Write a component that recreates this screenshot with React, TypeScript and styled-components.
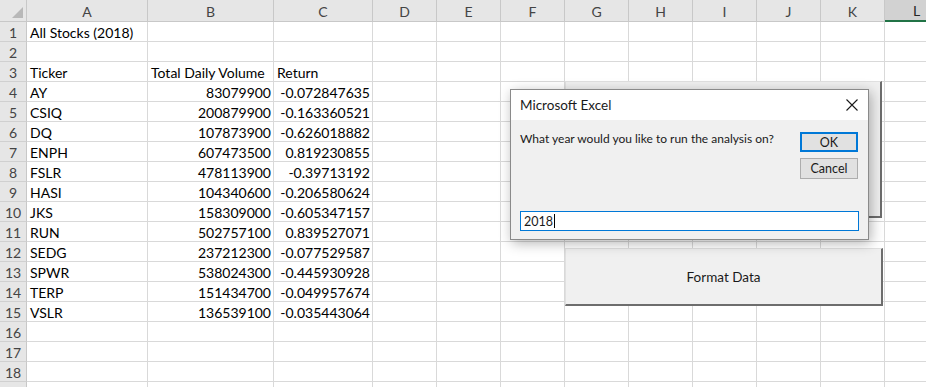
import React from "react";
import styled, { createGlobalStyle } from "styled-components";

const GlobalStyle = createGlobalStyle`
  html, body {
    margin: 0;
    padding: 0;
    background: #ffffff;
    overflow: hidden;
  }
  * {
    box-sizing: border-box;
  }
`;

const columns = ["A", "B", "C", "D", "E", "F", "G", "H", "I", "J", "K", "L"];

const stocks: [string, string, string][] = [
  ["AY", "83079900", "-0.072847635"],
  ["CSIQ", "200879900", "-0.163360521"],
  ["DQ", "107873900", "-0.626018882"],
  ["ENPH", "607473500", "0.819230855"],
  ["FSLR", "478113900", "-0.39713192"],
  ["HASI", "104340600", "-0.206580624"],
  ["JKS", "158309000", "-0.605347157"],
  ["RUN", "502757100", "0.839527071"],
  ["SEDG", "237212300", "-0.077529587"],
  ["SPWR", "538024300", "-0.445930928"],
  ["TERP", "151434700", "-0.049957674"],
  ["VSLR", "136539100", "-0.035443064"],
];

type CellValue = { text: string; right?: boolean };

// builds the sheet content row by row, rows 1..19
const buildRows = (): CellValue[][] => {
  const rows: CellValue[][] = [];
  for (let r = 1; r <= 19; r++) {
    const row: CellValue[] = columns.map(() => ({ text: "" }));
    if (r === 1) row[0] = { text: "All Stocks (2018)" };
    if (r === 3) {
      row[0] = { text: "Ticker" };
      row[1] = { text: "Total Daily Volume" };
      row[2] = { text: "Return" };
    }
    const s = stocks[r - 4];
    if (s) {
      row[0] = { text: s[0] };
      row[1] = { text: s[1], right: true };
      row[2] = { text: s[2], right: true };
    }
    rows.push(row);
  }
  return rows;
};

export default function App() {
  const rows = buildRows();
  return (
    <>
      <GlobalStyle />
      <Sheet>
        <Grid>
          <Corner>
            <CornerMark />
          </Corner>
          {columns.map((c) => (
            <ColHeader key={c} $selected={c === "L"}>
              {c}
            </ColHeader>
          ))}
          {rows.map((row, i) => (
            <React.Fragment key={i}>
              {/* row 19 is only a sliver at the bottom, its number is out of view */}
              <RowHeader>{i < 18 ? i + 1 : ""}</RowHeader>
              {row.map((cell, j) => (
                <Cell key={j} $right={cell.right}>
                  {cell.text}
                </Cell>
              ))}
            </React.Fragment>
          ))}
        </Grid>

        <SheetButton style={{ left: 565, top: 81, width: 317, height: 137 }} />
        <SheetButton style={{ left: 565, top: 248, width: 318, height: 58 }}>
          Format Data
        </SheetButton>

        <Dialog>
          <TitleBar>
            <Title>Microsoft Excel</Title>
            <CloseIcon width="12" height="12" viewBox="0 0 12 12">
              <path d="M0.5 0.5 L11.5 11.5 M11.5 0.5 L0.5 11.5" stroke="#1a1a1a" strokeWidth="1.1" />
            </CloseIcon>
          </TitleBar>
          <DialogBody>
            <PromptRow>
              <Prompt>What year would you like to run the analysis on?</Prompt>
              <ButtonColumn>
                <DialogButton $primary>OK</DialogButton>
                <DialogButton>Cancel</DialogButton>
              </ButtonColumn>
            </PromptRow>
            <InputBox>
              2018
              <Caret />
            </InputBox>
          </DialogBody>
        </Dialog>
      </Sheet>
    </>
  );
}

const cellFont = `"Lato", "Liberation Sans", sans-serif`;
const uiFont = `"Lato", "Noto Sans", sans-serif`;

const Sheet = styled.div`
  position: relative;
  width: 926px;
  height: 387px;
  overflow: hidden;
  background: #ffffff;
`;

const Grid = styled.div`
  display: grid;
  grid-template-columns: 27px 121px 126px 99px repeat(9, 64px);
  grid-template-rows: 22px;
  grid-auto-rows: 20px;
  font-family: ${cellFont};
  font-size: 14px;
  color: #000;
`;

const Corner = styled.div`
  position: relative;
  background: #e6e6e6;
  border-right: 1px solid #c8c8c8;
  border-bottom: 1px solid #c8c8c8;
`;

const CornerMark = styled.div`
  position: absolute;
  right: 3px;
  bottom: 3px;
  width: 0;
  height: 0;
  border-left: 11px solid transparent;
  border-bottom: 11px solid #b8b8b8;
`;

const ColHeader = styled.div<{ $selected?: boolean }>`
  display: flex;
  align-items: center;
  justify-content: center;
  background: ${(p) => (p.$selected ? "#d2d2d2" : "#e6e6e6")};
  border-right: 1px solid #c8c8c8;
  border-bottom: ${(p) => (p.$selected ? "2px solid #217346" : "1px solid #c8c8c8")};
  color: ${(p) => (p.$selected ? "#262626" : "#444444")};
  padding-top: 1px;
`;

const RowHeader = styled.div`
  display: flex;
  align-items: center;
  justify-content: center;
  background: #e6e6e6;
  border-right: 1px solid #c8c8c8;
  border-bottom: 1px solid #d0d0d0;
  color: #444444;
  padding-top: 1px;
`;

const Cell = styled.div<{ $right?: boolean }>`
  display: flex;
  align-items: center;
  justify-content: ${(p) => (p.$right ? "flex-end" : "flex-start")};
  padding: 1px ${(p) => (p.$right ? "2px" : "0")} 0 3px;
  border-right: 1px solid #d9d9d9;
  border-bottom: 1px solid #d9d9d9;
  white-space: nowrap;
  overflow: visible;
`;

const SheetButton = styled.div`
  position: absolute;
  display: flex;
  align-items: center;
  justify-content: center;
  background: #f0f0f0;
  border-top: 1px solid #e0e0e0;
  border-left: 1px solid #e0e0e0;
  border-right: 2px solid #6d6d6d;
  border-bottom: 2px solid #6d6d6d;
  font-family: ${uiFont};
  font-size: 13.5px;
  color: #1a1a1a;
`;

const Dialog = styled.div`
  position: absolute;
  left: 510px;
  top: 89px;
  width: 359px;
  height: 151px;
  display: flex;
  flex-direction: column;
  border: 1px solid #8a8a8a;
  background: #f0f0f0;
  box-shadow: 2px 3px 12px rgba(0, 0, 0, 0.3);
  font-family: ${uiFont};
  font-size: 12px;
  color: #1a1a1a;
`;

const TitleBar = styled.div`
  height: 30px;
  display: flex;
  align-items: center;
  justify-content: space-between;
  padding: 0 10px 0 9px;
  background: #ffffff;
`;

const Title = styled.span`
  font-size: 13.5px;
`;

const CloseIcon = styled.svg`
  display: block;
`;

const DialogBody = styled.div`
  flex: 1;
  display: flex;
  flex-direction: column;
  padding: 12px 9px 8px 9px;
`;

const PromptRow = styled.div`
  display: flex;
  justify-content: space-between;
`;

const Prompt = styled.span`
  line-height: 14px;
`;

const ButtonColumn = styled.div`
  display: flex;
  flex-direction: column;
  gap: 6px;
  margin-right: 1px;
`;

const DialogButton = styled.div<{ $primary?: boolean }>`
  width: 58px;
  height: ${(p) => (p.$primary ? "20px" : "21px")};
  display: flex;
  align-items: center;
  justify-content: center;
  background: #e1e1e1;
  border: ${(p) => (p.$primary ? "2px solid #0078d7" : "1px solid #adadad")};
  font-size: 12.5px;
`;

const InputBox = styled.div`
  margin-top: auto;
  height: 20px;
  display: flex;
  align-items: center;
  padding-left: 3px;
  background: #ffffff;
  border: 1px solid #0078d7;
  font-size: 12.5px;
`;

const Caret = styled.span`
  display: inline-block;
  width: 1px;
  height: 14px;
  margin-left: 1px;
  background: #000;
`;
